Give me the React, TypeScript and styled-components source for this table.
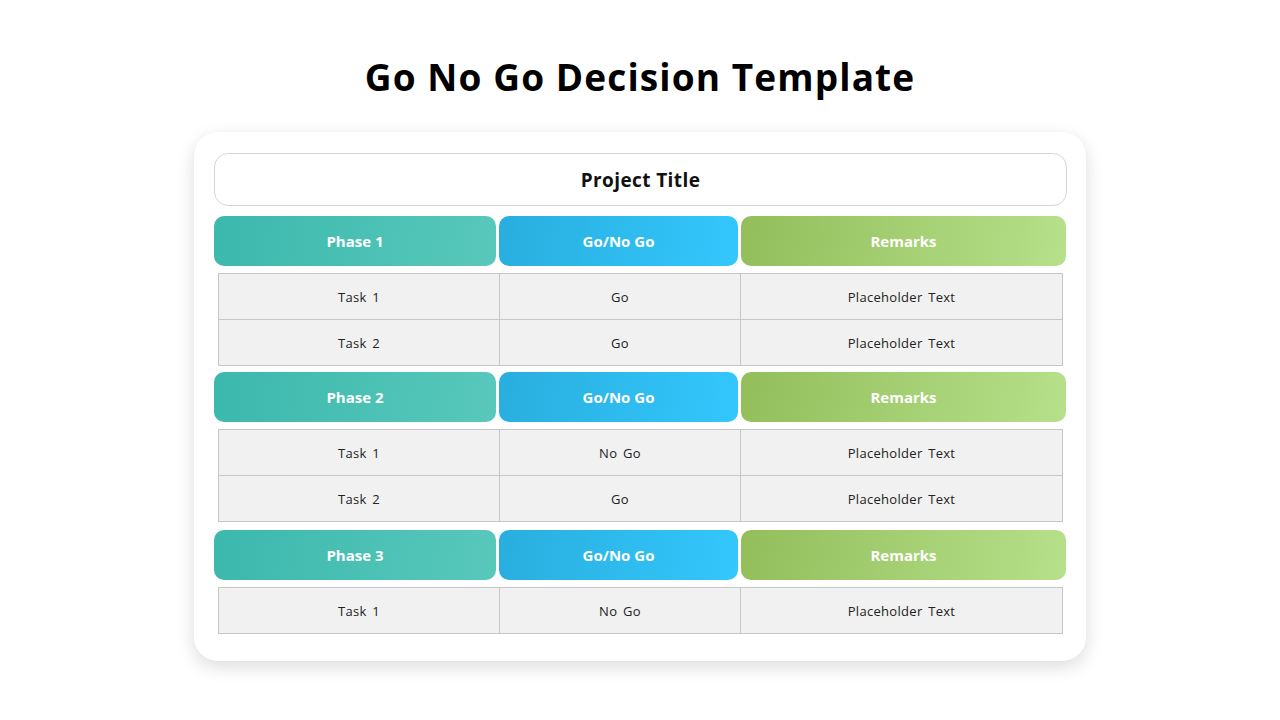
import styled, { createGlobalStyle } from "styled-components";

const GlobalStyle = createGlobalStyle`
	html, body {
		margin: 0;
		padding: 0;
		background: #ffffff;
	}
	body {
		font-family: "Open Sans", "DejaVu Sans", sans-serif;
	}
`;

const Page = styled.div`
	width: 1280px;
	height: 720px;
	display: flex;
	flex-direction: column;
	align-items: center;
	box-sizing: border-box;
	padding-top: 53px;
`;

const Heading = styled.h1`
	margin: 0;
	height: 48px;
	line-height: 48px;
	font-size: 37px;
	font-weight: 700;
	color: #000;
	letter-spacing: 1.1px;
`;

const Card = styled.div`
	margin-top: 31px;
	width: 892px;
	box-sizing: border-box;
	padding: 21px 19px 27px 20px;
	background: #fff;
	border-radius: 24px;
	box-shadow: 0 6px 18px rgba(0, 0, 0, 0.14);
	display: flex;
	flex-direction: column;
`;

const ProjectTitle = styled.div`
	height: 53px;
	box-sizing: border-box;
	border: 1px solid #d6d6d6;
	border-radius: 14px;
	display: flex;
	align-items: center;
	justify-content: center;
	font-size: 19px;
	font-weight: 700;
	letter-spacing: 0.4px;
	color: #111;
	margin-bottom: 10px;
`;

const HeaderRow = styled.div`
	display: grid;
	grid-template-columns: 282px 239px 325px;
	column-gap: 3px;
	height: 50px;
`;

const gradients = {
	phase: "linear-gradient(100deg, #3cb8ad 0%, #58c8bb 100%)",
	go: "linear-gradient(100deg, #29aede 0%, #33c7fd 100%)",
	remarks: "linear-gradient(100deg, #93be5b 0%, #b6e08a 100%)",
};

const HeaderCell = styled.div<{ $kind: keyof typeof gradients }>`
	background: ${(p) => gradients[p.$kind]};
	border-radius: 10px;
	color: #fff;
	font-size: 15px;
	font-weight: 700;
	display: flex;
	align-items: center;
	justify-content: center;
`;

const Table = styled.div<{ $gapAfter: number }>`
	margin: 7px 4px ${(p) => p.$gapAfter}px 4px;
	display: grid;
	grid-template-columns: 281px 241px 322px;
	border-top: 1px solid #c6c6c6;
	border-left: 1px solid #c6c6c6;
	background: #f1f1f1;
`;

const Cell = styled.div`
	height: 46px;
	box-sizing: border-box;
	border-right: 1px solid #c6c6c6;
	border-bottom: 1px solid #c6c6c6;
	display: flex;
	align-items: center;
	justify-content: center;
	font-size: 13px;
	color: #222;
	letter-spacing: 0.3px;
	word-spacing: 2px;
`;

type Phase = {
	name: string;
	tasks: { task: string; decision: string; remark: string }[];
};

const phases: Phase[] = [
	{
		name: "Phase 1",
		tasks: [
			{ task: "Task 1", decision: "Go", remark: "Placeholder Text" },
			{ task: "Task 2", decision: "Go", remark: "Placeholder Text" },
		],
	},
	{
		name: "Phase 2",
		tasks: [
			{ task: "Task 1", decision: "No Go", remark: "Placeholder Text" },
			{ task: "Task 2", decision: "Go", remark: "Placeholder Text" },
		],
	},
	{
		name: "Phase 3",
		tasks: [{ task: "Task 1", decision: "No Go", remark: "Placeholder Text" }],
	},
];

const App = () => {
	return (
		<>
			<GlobalStyle />
			<Page>
				<Heading>Go No Go Decision Template</Heading>
				<Card>
					<ProjectTitle>Project Title</ProjectTitle>
					{phases.map((phase, i) => (
						<div key={phase.name}>
							<HeaderRow>
								<HeaderCell $kind="phase">{phase.name}</HeaderCell>
								<HeaderCell $kind="go">Go/No Go</HeaderCell>
								<HeaderCell $kind="remarks">Remarks</HeaderCell>
							</HeaderRow>
							<Table $gapAfter={i === 0 ? 6 : i === phases.length - 1 ? 0 : 8}>
								{phase.tasks.map((t, j) => (
									<div key={j} style={{ display: "contents" }}>
										<Cell>{t.task}</Cell>
										<Cell>{t.decision}</Cell>
										<Cell>{t.remark}</Cell>
									</div>
								))}
							</Table>
						</div>
					))}
				</Card>
			</Page>
		</>
	);
};

export default App;
